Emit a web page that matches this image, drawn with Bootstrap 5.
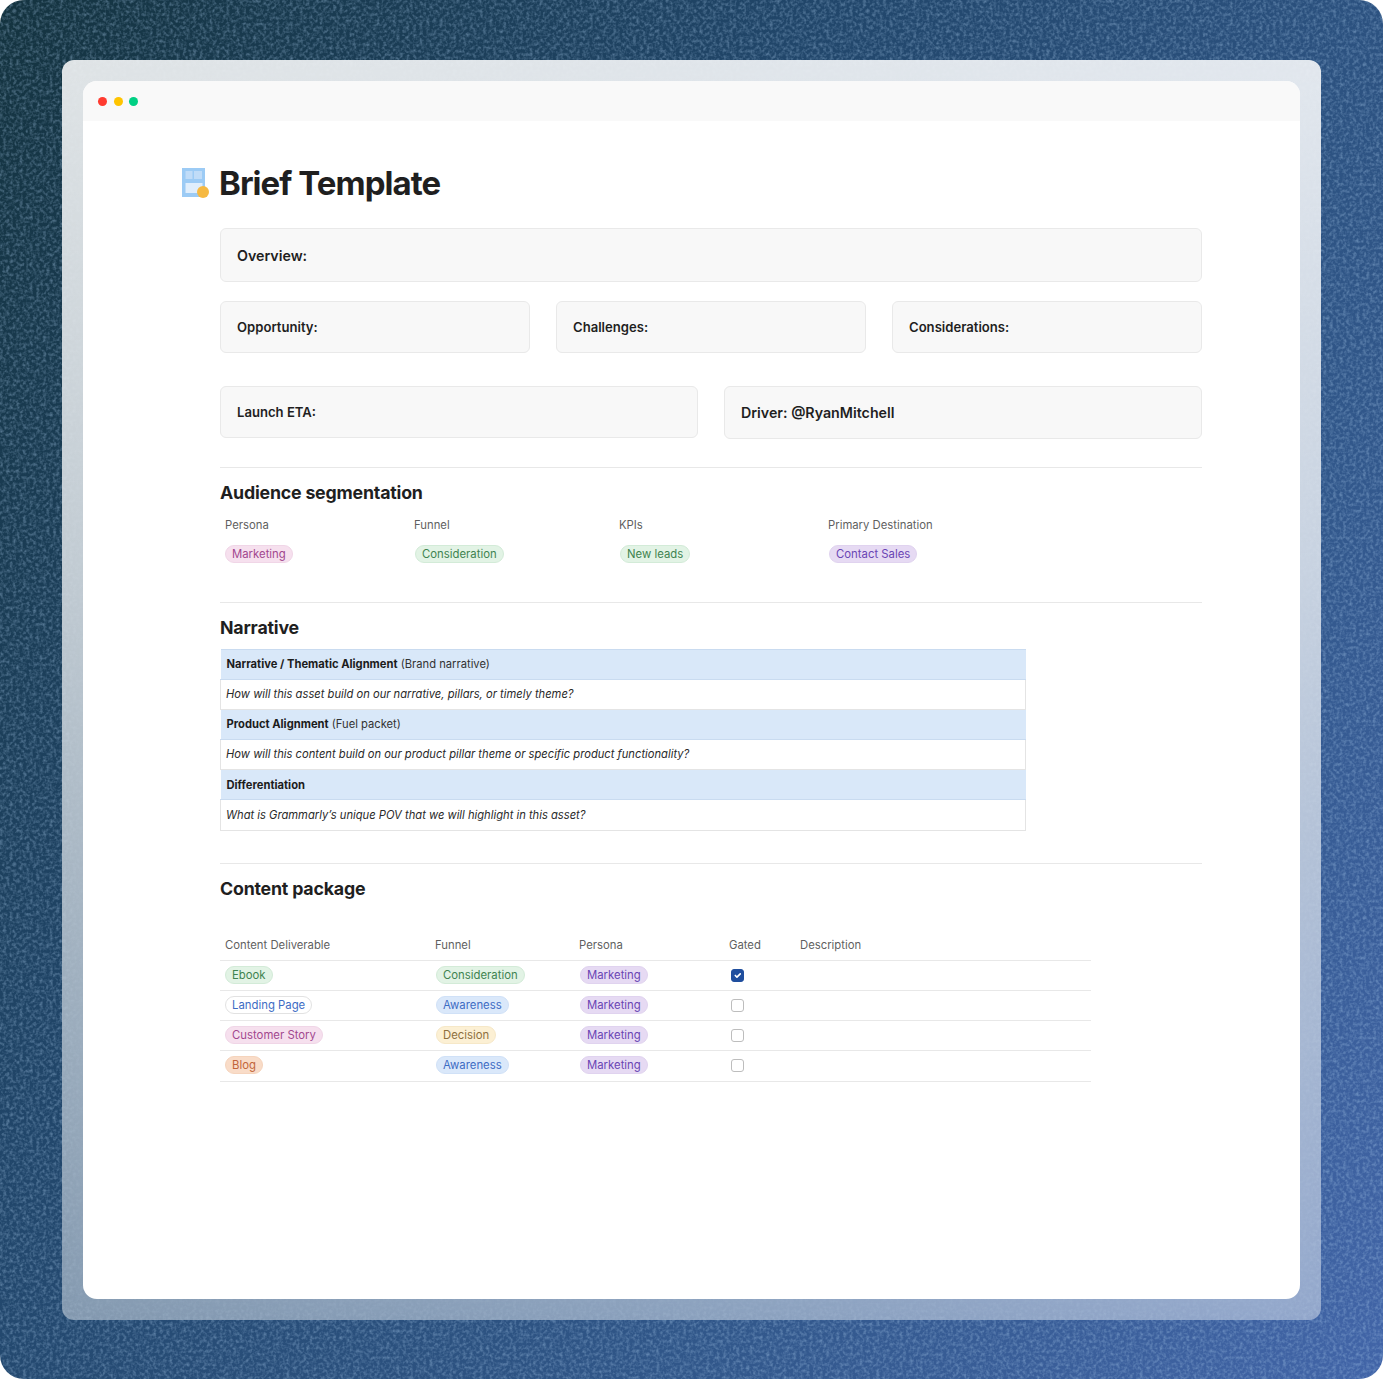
<!DOCTYPE html>
<html lang="en">
<head>
    <meta charset="UTF-8">
    <meta name="viewport" content="width=device-width, initial-scale=1.0">
    <title>Brief Template</title>
    <link href="https://cdn.jsdelivr.net/npm/bootstrap@5.3.0/dist/css/bootstrap.min.css" rel="stylesheet">
    <style>
        html, body { background: #fff; }
        body { font-family: Inter, "Liberation Sans", sans-serif; color: #1f1f1f; }

        /* backdrop with grain */
        .backdrop {
            position: relative; overflow: hidden; height: 1379px; padding: 60px 62px 59px 62px;
            border-radius: 24px;
            background: linear-gradient(125deg, #14333f 0%, #21466a 35%, #31578a 70%, #4265a8 100%);
        }
        .grain { position: absolute; inset: 0; width: 100%; height: 100%; opacity: .4; }

        /* frame and window */
        .frame {
            position: relative; height: 100%; padding: 21px; border-radius: 12px;
            -webkit-backdrop-filter: blur(24px); backdrop-filter: blur(24px);
            background: linear-gradient(180deg, rgba(255,255,255,.86) 0%, rgba(255,255,255,.72) 40%, rgba(255,255,255,.42) 100%);
        }
        .window { height: 100%; background: #fff; border-radius: 14px; overflow: hidden; }
        .titlebar { height: 40px; background: #f9f9f9; padding-left: 15px; gap: 6.5px; }
        .dot { width: 9px; height: 9px; border-radius: 50%; }
        .doc { padding: 42px 98px 0 137px; }

        /* title */
        .doc-title { margin: 0 0 25px -38px; height: 40px; gap: 9px; }
        .doc-title h1 { font-size: 33px; font-weight: 700; letter-spacing: -.029em; margin: 0; line-height: 40px; }

        /* callouts */
        .callout {
            background: #f8f8f8; border: 1px solid #e9e9e9; border-radius: 6px; padding: 2px 16px 0;
            font-size: 13.1px; font-weight: 600; height: 52px;
        }
        .callout.lg { height: 54px; font-size: 14.25px; }
        .callout.driver { height: 53px; font-size: 14.25px; padding-top: 0; }
        .gap-callout { gap: 26px; }

        .sep { height: 1px; background: #e8e8e8; }
        h2.section { font-size: 17.8px; font-weight: 700; margin: 0; line-height: 24px; letter-spacing: -.012em; }

        /* pills */
        .pill {
            display: inline-block; vertical-align: top; font-size: 11.35px; font-weight: 400; line-height: 16px; padding: 0 6px;
            border: 1px solid; border-radius: 9px; white-space: nowrap;
        }
        .seg-row div:not(:first-child) .pill, .pkg td:not(:first-child) .pill { margin-left: 1px; }
        .pkg td .pill { margin-bottom: 2px; }
        .pill-green { background: #e2f3e5; border-color: #d3ebd8; color: #3f8350; }
        .pill-pink { background: #f6e0ee; border-color: #f0d6e7; color: #a2478f; }
        .pill-violet { background: #e6daf3; border-color: #e0d3ef; color: #6a45b4; }
        .pill-blue { background: #dae8fa; border-color: #d0e1f7; color: #3e6cc4; }
        .pill-white { background: #fff; border-color: #e2e2e2; color: #3e6cc4; }
        .pill-yellow { background: #fcf0d4; border-color: #f6e8c8; color: #8d6f3d; }
        .pill-orange { background: #f9dcc8; border-color: #f5d4bd; color: #c2653a; }

        /* tables */
        .grid-head { font-size: 11.3px; color: #5f5f5f; line-height: 16px; }
        .seg-row { display: grid; grid-template-columns: 189px 205px 209px 1fr; padding-left: 5px; }
        .pkg { width: 871px; margin: 0; table-layout: fixed; }
        .pkg th, .pkg td { padding: 0 5px; height: 30.1px; line-height: 18px; vertical-align: middle; border-bottom: 1px solid #e8e8e8; border-top: 0; }
        .pkg th { font-weight: 400; font-size: 11.3px; color: #5f5f5f; }
        .pkg .form-check-input { display: block; width: 13px; height: 13px; margin: 0 0 0 2px; border: 1px solid #bdbdbd; border-radius: 3px; }
        .pkg .form-check-input:checked { background-color: #1f4e9e; border-color: #1f4e9e; }

        .narr { width: 806px; margin: 0; }
        .narr td { padding: 0 5px; height: 30.1px; font-size: 11.2px; vertical-align: middle; border: 1px solid #e4e4e4; color: #2a2a2a; }
        .narr tr.band td { background: #d9e8f9; border-color: #c9dbf0; border-left: 0; border-right: 0; color: #333; padding-left: 6px; }
        .narr b { font-weight: 700; color: #1c1c1c; }
    </style>
</head>
<body>
<div class="backdrop">
    <svg class="grain" aria-hidden="true">
        <filter id="noise" x="0" y="0" width="100%" height="100%">
            <feTurbulence type="fractalNoise" baseFrequency=".3" numOctaves="2" seed="4"/>
            <feColorMatrix type="matrix" values="0 0 0 0 .42  0 0 0 0 .62  0 0 0 0 .85  2 0 0 0 -.8"/>
            <feGaussianBlur stdDeviation=".7"/>
        </filter>
        <rect width="100%" height="100%" filter="url(#noise)"/>
    </svg>
    <div class="frame">
        <div class="window">
            <div class="titlebar d-flex align-items-center">
                <span class="dot" style="background:#ff3b30"></span>
                <span class="dot" style="background:#ffc400"></span>
                <span class="dot" style="background:#00d084"></span>
            </div>
            <div class="doc">
                <!-- title -->
                <div class="doc-title d-flex align-items-center">
                    <svg width="28" height="30" viewBox="0 0 28 30" class="flex-shrink-0">
                        <rect x="0" y="0" width="23" height="29" fill="#9ccbf5"/>
                        <rect x="3.500" y="3" width="7" height="8" fill="#c0dcf8"/>
                        <rect x="12" y="3" width="8" height="8" fill="#c0dcf8"/>
                        <rect x="3.500" y="15" width="17" height="10" fill="#e0eefc"/>
                        <circle cx="21" cy="24" r="6" fill="#f6b942"/>
                    </svg>
                    <h1>Brief Template</h1>
                </div>

                <!-- callouts -->
                <div class="callout lg d-flex align-items-center">Overview:</div>
                <div class="d-flex gap-callout" style="margin-top:19px">
                    <div class="callout flex-fill w-100 d-flex align-items-center">Opportunity:</div>
                    <div class="callout flex-fill w-100 d-flex align-items-center">Challenges:</div>
                    <div class="callout flex-fill w-100 d-flex align-items-center">Considerations:</div>
                </div>
                <div class="d-flex gap-callout" style="margin-top:33px">
                    <div class="callout w-100 d-flex align-items-center">Launch ETA:</div>
                    <div class="callout driver w-100 d-flex align-items-center">Driver: @RyanMitchell</div>
                </div>

                <div class="sep" style="margin-top:28px"></div>

                <!-- audience -->
                <h2 class="section" style="margin-top:13px">Audience segmentation</h2>
                <div class="seg-row grid-head" style="margin-top:12px">
                    <div>Persona</div><div>Funnel</div><div>KPIs</div><div>Primary Destination</div>
                </div>
                <div class="seg-row" style="margin-top:12px">
                    <div><span class="pill pill-pink">Marketing</span></div>
                    <div><span class="pill pill-green">Consideration</span></div>
                    <div><span class="pill pill-green">New leads</span></div>
                    <div><span class="pill pill-violet">Contact Sales</span></div>
                </div>

                <div class="sep" style="margin-top:33px"></div>

                <!-- narrative -->
                <h2 class="section" style="margin-top:13px">Narrative</h2>
                <table class="table narr" style="margin-top:9px">
                    <tbody>
                    <tr class="band"><td><b>Narrative / Thematic Alignment</b> (Brand narrative)</td></tr>
                    <tr><td><i>How will this asset build on our narrative, pillars, or timely theme?</i></td></tr>
                    <tr class="band"><td><b>Product Alignment</b> (Fuel packet)</td></tr>
                    <tr><td><i>How will this content build on our product pillar theme or specific product functionality?</i></td></tr>
                    <tr class="band"><td><b>Differentiation</b></td></tr>
                    <tr><td><i>What is Grammarly’s unique POV that we will highlight in this asset?</i></td></tr>
                    </tbody>
                </table>

                <div class="sep" style="margin-top:32px"></div>

                <!-- content package -->
                <h2 class="section" style="margin-top:13px">Content package</h2>
                <table class="table pkg" style="margin-top:30px">
                    <colgroup>
                        <col style="width:210px"><col style="width:144px"><col style="width:150px"><col style="width:71px"><col>
                    </colgroup>
                    <thead>
                    <tr><th>Content Deliverable</th><th>Funnel</th><th>Persona</th><th>Gated</th><th>Description</th></tr>
                    </thead>
                    <tbody>
                    <tr>
                        <td><span class="pill pill-green">Ebook</span></td>
                        <td><span class="pill pill-green">Consideration</span></td>
                        <td><span class="pill pill-violet">Marketing</span></td>
                        <td><input class="form-check-input" type="checkbox" checked aria-label="Gated"></td>
                        <td></td>
                    </tr>
                    <tr>
                        <td><span class="pill pill-white">Landing Page</span></td>
                        <td><span class="pill pill-blue">Awareness</span></td>
                        <td><span class="pill pill-violet">Marketing</span></td>
                        <td><input class="form-check-input" type="checkbox" aria-label="Gated"></td>
                        <td></td>
                    </tr>
                    <tr>
                        <td><span class="pill pill-pink">Customer Story</span></td>
                        <td><span class="pill pill-yellow">Decision</span></td>
                        <td><span class="pill pill-violet">Marketing</span></td>
                        <td><input class="form-check-input" type="checkbox" aria-label="Gated"></td>
                        <td></td>
                    </tr>
                    <tr>
                        <td><span class="pill pill-orange">Blog</span></td>
                        <td><span class="pill pill-blue">Awareness</span></td>
                        <td><span class="pill pill-violet">Marketing</span></td>
                        <td><input class="form-check-input" type="checkbox" aria-label="Gated"></td>
                        <td></td>
                    </tr>
                    </tbody>
                </table>
            </div>
        </div>
    </div>
</div>
<script src="https://cdn.jsdelivr.net/npm/bootstrap@5.3.0/dist/js/bootstrap.bundle.min.js"></script>
</body>
</html>
